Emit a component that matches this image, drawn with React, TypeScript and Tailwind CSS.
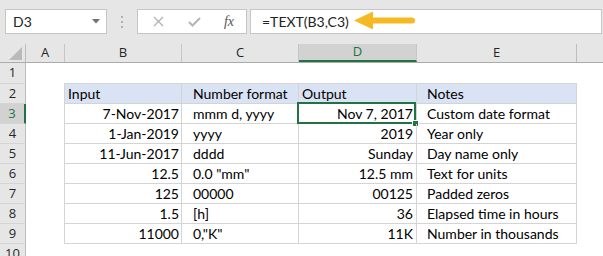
import React from "react";

const cellFont = { fontFamily: "Lato, 'Open Sans', sans-serif" };
const hdrFont = { fontFamily: "'Open Sans', 'Noto Sans', sans-serif" };

type Row = { b: string; c: string; d: string; e: string };
const rows: Row[] = [
  { b: "7-Nov-2017", c: "mmm d, yyyy", d: "Nov 7, 2017", e: "Custom date format" },
  { b: "1-Jan-2019", c: "yyyy", d: "2019", e: "Year only" },
  { b: "11-Jun-2017", c: "dddd", d: "Sunday", e: "Day name only" },
  { b: "12.5", c: '0.0 "mm"', d: "12.5 mm", e: "Text for units" },
  { b: "125", c: "00000", d: "00125", e: "Padded zeros" },
  { b: "1.5", c: "[h]", d: "36", e: "Elapsed time in hours" },
  { b: "11000", c: '0,"K"', d: "11K", e: "Number in thousands" },
];

function RowHdr({ n, sel, h }: { n: number; sel?: boolean; h: string }) {
  return (
    <div
      className={`${h} w-[26px] shrink-0 flex items-center justify-center border-b border-[#d4d4d4] text-[13px] ${
        sel
          ? "bg-[#d2d2d2] text-[#217346] border-r-2 border-r-[#217346]"
          : "bg-[#e6e6e6] text-[#262626] border-r border-r-[#bdbdbd]"
      }`}
      style={hdrFont}
    >
      {n}
    </div>
  );
}

export default function App() {
  return (
    <div className="relative w-[603px] h-[256px] overflow-hidden bg-white text-black" style={cellFont}>
      {/* Toolbar */}
      <div className="h-[44px] bg-[#e6e6e6] flex items-start pt-[9px] pl-[5px]">
        <div className="w-[102px] h-[25px] bg-white border border-[#c6c6c6] flex items-center justify-between pl-[7px] pr-[6px]">
          <span className="text-[14px] text-[#222]">D3</span>
          <svg width="8" height="5" viewBox="0 0 8 5">
            <path d="M0 0 L8 0 L4 4.5 Z" fill="#707070" />
          </svg>
        </div>
        <div className="w-[30px] h-[25px] flex flex-col items-center justify-center gap-[3px]">
          <div className="w-[2px] h-[2px] bg-[#b0b0b0]" />
          <div className="w-[2px] h-[2px] bg-[#b0b0b0]" />
          <div className="w-[2px] h-[2px] bg-[#b0b0b0]" />
        </div>
        <div className="w-[110px] h-[25px] bg-white border border-[#c6c6c6] flex items-center">
          <div className="w-[38px] flex justify-center pl-[2px]">
            <svg width="11" height="11" viewBox="0 0 11 11">
              <path d="M1 1 L10 10 M10 1 L1 10" stroke="#b4b4b4" strokeWidth="1.4" />
            </svg>
          </div>
          <div className="w-[36px] flex justify-center">
            <svg width="13" height="10" viewBox="0 0 13 10">
              <path d="M1 5 L4.5 8.5 L12 1" stroke="#b4b4b4" strokeWidth="2" fill="none" />
            </svg>
          </div>
          <div className="w-[34px] flex justify-center">
            <span className="italic text-[14px] text-[#555]" style={{ fontFamily: "'Liberation Serif', serif" }}>
              fx
            </span>
          </div>
        </div>
        <div className="ml-[3px] w-[352px] h-[25px] bg-white border border-[#c6c6c6] flex items-center pl-[11px]">
          <span className="text-[14px] text-[#222]">=TEXT(B3,C3)</span>
        </div>
      </div>

      {/* Arrow overlay */}
      <svg className="absolute left-[352px] top-[11px]" width="64" height="20" viewBox="0 0 64 20">
        <path d="M2 9.5 L21 0.5 L21 18.5 Z" fill="#f4b923" />
        <path d="M19 9.5 L60 9.5" stroke="#f4b923" strokeWidth="6" strokeLinecap="round" />
      </svg>

      {/* Column header */}
      <div className="h-[19px] flex bg-[#e6e6e6] border-b border-[#ababab] text-[13px] text-[#262626]" style={hdrFont}>
        <div className="w-[26px] shrink-0 border-r border-[#bdbdbd] flex items-end justify-end pr-[3px] pb-[2px]">
          <svg width="13" height="13" viewBox="0 0 13 13">
            <path d="M13 0 L13 13 L0 13 Z" fill="#b9b9b9" />
          </svg>
        </div>
        <div className="w-[39px] shrink-0 border-r border-[#c6c6c6] flex items-center justify-center">A</div>
        <div className="w-[117px] shrink-0 border-r border-[#c6c6c6] flex items-center justify-center">B</div>
        <div className="w-[117px] shrink-0 border-r border-[#c6c6c6] flex items-center justify-center">C</div>
        <div className="w-[118px] shrink-0 border-r border-[#c6c6c6] bg-[#d2d2d2] border-b-2 border-b-[#217346] text-[#217346] flex items-center justify-center">
          D
        </div>
        <div className="w-[160px] shrink-0 border-r border-[#bdbdbd] flex items-center justify-center">E</div>
        <div className="flex-1" />
      </div>

      {/* Row 1 */}
      <div className="flex h-[21px]">
        <RowHdr n={1} h="h-[21px]" />
        <div className="w-[38px] shrink-0" />
        <div className="w-[513px] shrink-0 border-b border-[#d4d4d4]" />
      </div>

      {/* Row 2 header */}
      <div className="flex h-[20px] text-[14px]">
        <RowHdr n={2} h="h-[20px]" />
        <div className="w-[38px] shrink-0" />
        <div className="w-[118px] shrink-0 bg-[#dae3f3] border-l border-r border-b border-[#d4d4d4] flex items-end pl-[3px] pb-[1px] leading-[17px]">Input</div>
        <div className="w-[117px] shrink-0 bg-[#dae3f3] border-r border-b border-[#d4d4d4] flex items-end pl-[11px] pb-[1px] leading-[17px]">Number format</div>
        <div className="w-[118px] shrink-0 bg-[#dae3f3] border-r border-b border-[#d4d4d4] flex items-end pl-[3px] pb-[1px] leading-[17px]">Output</div>
        <div className="w-[160px] shrink-0 bg-[#dae3f3] border-r border-b border-[#d4d4d4] flex items-end pl-[10px] pb-[1px] leading-[17px]">Notes</div>
      </div>

      {rows.map((r, i) => (
        <div key={i} className="flex h-[20px] text-[14px]">
          <RowHdr n={i + 3} h="h-[20px]" sel={i === 0} />
          <div className="w-[38px] shrink-0" />
          <div className="w-[118px] shrink-0 border-l border-r border-b border-[#d4d4d4] flex items-end justify-end pr-[2px] pb-[1px] leading-[17px]">{r.b}</div>
          <div className="w-[117px] shrink-0 border-r border-b border-[#d4d4d4] flex items-end pl-[11px] pb-[1px] leading-[17px]">{r.c}</div>
          <div className="relative w-[118px] shrink-0 border-r border-b border-[#d4d4d4] flex items-end justify-end pr-[3px] pb-[1px] leading-[17px]">
            {r.d}
            {i === 0 && (
              <>
                <div className="absolute -left-[2px] -top-[2px] right-0 -bottom-[1px] border-2 border-[#217346]" />
                <div className="absolute -right-[2px] -bottom-[3px] w-[5px] h-[5px] bg-[#217346] outline outline-1 outline-white" />
              </>
            )}
          </div>
          <div className="w-[160px] shrink-0 border-r border-b border-[#d4d4d4] flex items-end pl-[10px] pb-[1px] leading-[17px]">{r.e}</div>
        </div>
      ))}

      {/* Row 10 */}
      <div className="flex h-[20px]">
        <RowHdr n={10} h="h-[20px]" />
      </div>
    </div>
  );
}
